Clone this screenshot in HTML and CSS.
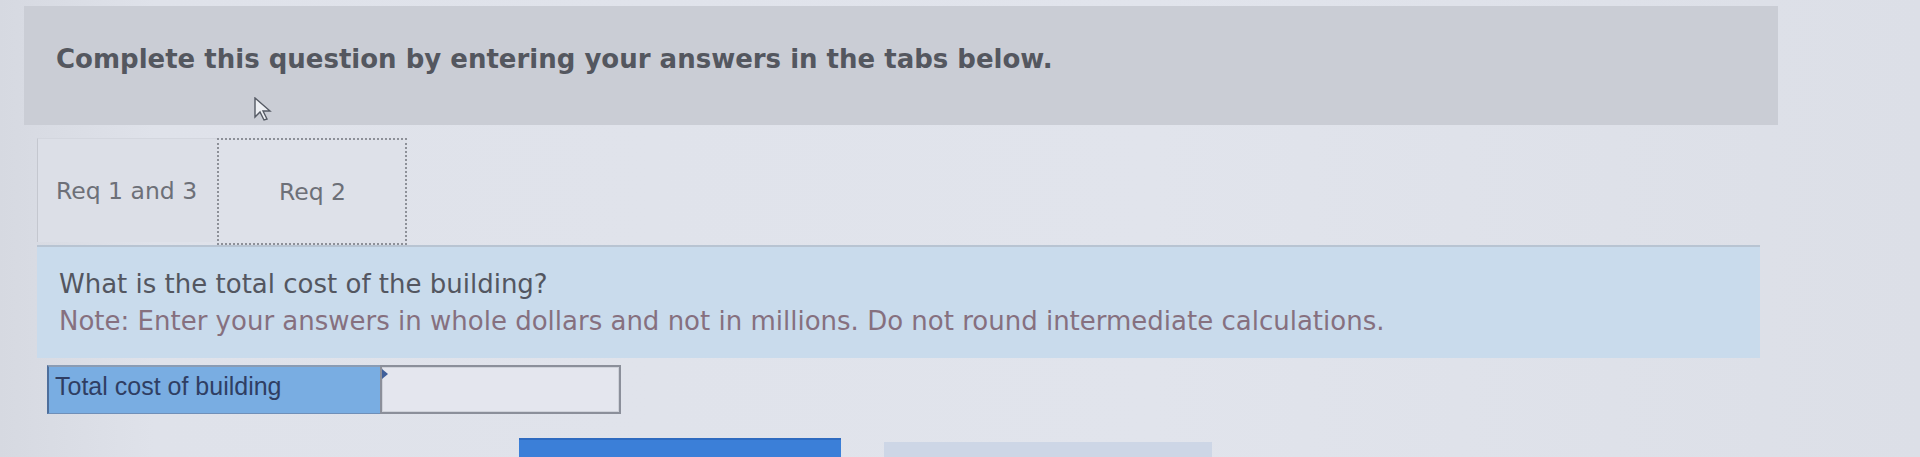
FILE: index.html
```html
<!DOCTYPE html>
<html>
<head>
<meta charset="utf-8">
<link rel="stylesheet" href="styles.css">
</head>
<body>
<div class="page">
  <div class="header">
    <p class="instr">Complete this question by entering your answers in the tabs below.</p>
    <svg class="cursor" width="24" height="26" viewBox="0 0 24 26"><path d="M2 1 L2 20 L7 15 L11 23 L14 22 L10 14 L17 14 Z" fill="#eef0f4" stroke="#555a64" stroke-width="1.4"/></svg>
  </div>
  <div class="tabs">
    <div class="tab tab-a">Req 1 and 3</div>
    <div class="tab tab-b">Req 2</div>
  </div>
  <div class="question">
    <p class="q">What is the total cost of the building?</p>
    <p class="note">Note: Enter your answers in whole dollars and not in millions. Do not round intermediate calculations.</p>
  </div>
  <div class="answer">
    <div class="label">Total cost of building</div>
    <div class="input"><span class="marker"></span></div>
  </div>
  <div class="buttons">
    <div class="btn btn-primary"></div>
    <div class="btn btn-secondary"></div>
  </div>
</div>
</body>
</html>
```
FILE: styles.css
```css
html, body {
  margin: 0;
  padding: 0;
  overflow: hidden;
}
body {
  width: 1920px;
  height: 457px;
  background: linear-gradient(90deg, #d6d9e1 0%, #dfe2ea 8%, #e1e4ec 60%, #dcdfe7 100%);
}
.page {
  padding-top: 6px;
  height: 451px;
  overflow: hidden;
}
.header {
  position: relative;
  margin-left: 24px;
  width: 1754px;
  height: 119px;
  background: #cacdd5;
  box-sizing: border-box;
  padding: 40px 0 0 32px;
}
.instr {
  margin: 0;
  font-family: "DejaVu Sans", Verdana, sans-serif;
  font-weight: 700;
  font-size: 26px;
  line-height: 26px;
  color: #54575f;
}
.cursor {
  position: absolute;
  left: 229px;
  top: 91px;
}
.tabs {
  display: flex;
  margin: 13px 0 0 37px;
  height: 107px;
  align-items: flex-start;
}
.tab {
  box-sizing: border-box;
  display: flex;
  align-items: center;
  font-family: "DejaVu Sans", Verdana, sans-serif;
  font-size: 23.5px;
  color: #6d7078;
  background: #dcdfe7;
}
.tab-a {
  width: 180px;
  height: 104px;
  border-top: 1px solid #d3d6de;
  border-left: 1px solid #c4c7cf;
  padding-left: 18px;
}
.tab-b {
  width: 190px;
  height: 107px;
  border: 2px dotted #8d9098;
  padding-left: 60px;
  background: #dee1e9;
}
.question {
  margin-left: 37px;
  width: 1723px;
  height: 113px;
  box-sizing: border-box;
  background: #c9dbec;
  border-top: 2px solid #b8c4d2;
  padding: 19px 0 0 22px;
  font-family: "DejaVu Sans", Verdana, sans-serif;
  font-size: 26px;
  line-height: 37px;
}
.question p {
  margin: 0;
}
.q {
  color: #535660;
}
.note {
  color: #86707f;
}
.answer {
  display: flex;
  margin: 7px 0 0 47px;
  height: 49px;
}
.label {
  width: 333px;
  box-sizing: border-box;
  background: #79ade2;
  border-top: 2px solid #8a9cb4;
  border-left: 2px solid #4e6f9c;
  border-bottom: 1px solid #6f8fb8;
  padding: 5px 0 0 6px;
  font-family: "Liberation Sans", Arial, sans-serif;
  font-size: 25px;
  color: #2f3e63;
}
.input {
  position: relative;
  width: 241px;
  box-sizing: border-box;
  background: #e4e6ee;
  border: 2px solid #8b8f9a;
  box-shadow: inset 0 0 0 1px #cfd2da;
}
.marker {
  position: absolute;
  left: 0;
  top: 2px;
  width: 0;
  height: 0;
  border-top: 5px solid transparent;
  border-bottom: 5px solid transparent;
  border-left: 6px solid #3f5f9a;
}
.buttons {
  display: flex;
  margin: 24px 0 0 519px;
  gap: 43px;
  align-items: flex-start;
}
.btn {
  height: 40px;
}
.btn-primary {
  width: 322px;
  background: #3b7fd8;
  border-top: 2px solid #2f6bc0;
}
.btn-secondary {
  width: 328px;
  margin-top: 4px;
  background: #cdd6e6;
}
```
